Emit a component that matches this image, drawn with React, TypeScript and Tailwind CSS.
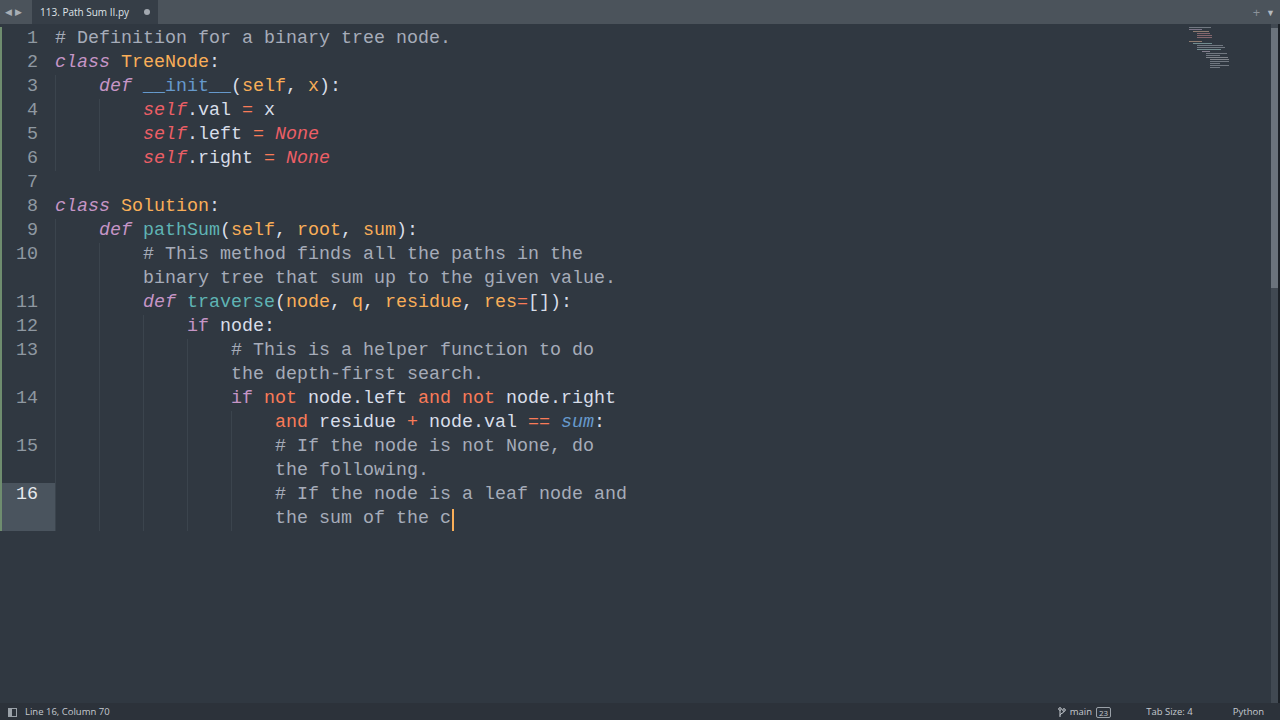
import React from "react";

type Tok = [string, string];

const C = {
  cm: "text-[#a6acb9]",
  kw: "text-[#c695c6] italic",
  ctl: "text-[#c695c6]",
  cls: "text-[#f9ae58]",
  fn: "text-[#5fb4b4]",
  par: "text-[#f9ae58]",
  self: "text-[#ec5f66] italic",
  op: "text-[#f97b58]",
  txt: "text-[#d8dee9]",
  blue: "text-[#6699cc]",
  blueI: "text-[#6699cc] italic",
};

type Row = { num?: string; indent: number; toks: Tok[]; cursor?: boolean };

const rows: Row[] = [
  { num: "1", indent: 0, toks: [["# Definition for a binary tree node.", C.cm]] },
  { num: "2", indent: 0, toks: [["class", C.kw], [" ", C.txt], ["TreeNode", C.cls], [":", C.txt]] },
  {
    num: "3",
    indent: 4,
    toks: [["def", C.kw], [" ", C.txt], ["__init__", C.blue], ["(", C.txt], ["self", C.par], [", ", C.txt], ["x", C.par], ["):", C.txt]],
  },
  { num: "4", indent: 8, toks: [["self", C.self], [".val ", C.txt], ["=", C.op], [" x", C.txt]] },
  { num: "5", indent: 8, toks: [["self", C.self], [".left ", C.txt], ["=", C.op], [" ", C.txt], ["None", C.self]] },
  { num: "6", indent: 8, toks: [["self", C.self], [".right ", C.txt], ["=", C.op], [" ", C.txt], ["None", C.self]] },
  { num: "7", indent: 0, toks: [] },
  { num: "8", indent: 0, toks: [["class", C.kw], [" ", C.txt], ["Solution", C.cls], [":", C.txt]] },
  {
    num: "9",
    indent: 4,
    toks: [
      ["def", C.kw], [" ", C.txt], ["pathSum", C.fn], ["(", C.txt], ["self", C.par], [", ", C.txt],
      ["root", C.par], [", ", C.txt], ["sum", C.par], ["):", C.txt],
    ],
  },
  { num: "10", indent: 8, toks: [["# This method finds all the paths in the", C.cm]] },
  { indent: 8, toks: [["binary tree that sum up to the given value.", C.cm]] },
  {
    num: "11",
    indent: 8,
    toks: [
      ["def", C.kw], [" ", C.txt], ["traverse", C.fn], ["(", C.txt], ["node", C.par], [", ", C.txt], ["q", C.par],
      [", ", C.txt], ["residue", C.par], [", ", C.txt], ["res", C.par], ["=", C.op], ["[]):", C.txt],
    ],
  },
  { num: "12", indent: 12, toks: [["if", C.ctl], [" node:", C.txt]] },
  { num: "13", indent: 16, toks: [["# This is a helper function to do", C.cm]] },
  { indent: 16, toks: [["the depth-first search.", C.cm]] },
  {
    num: "14",
    indent: 16,
    toks: [
      ["if", C.ctl], [" ", C.txt], ["not", C.op], [" node.left ", C.txt], ["and", C.op], [" ", C.txt],
      ["not", C.op], [" node.right", C.txt],
    ],
  },
  {
    indent: 20,
    toks: [
      ["and", C.op], [" residue ", C.txt], ["+", C.op], [" node.val ", C.txt], ["==", C.op], [" ", C.txt],
      ["sum", C.blueI], [":", C.txt],
    ],
  },
  { num: "15", indent: 20, toks: [["# If the node is not None, do", C.cm]] },
  { indent: 20, toks: [["the following.", C.cm]] },
  { num: "16", indent: 20, toks: [["# If the node is a leaf node and", C.cm]] },
  { indent: 20, toks: [["the sum of the c", C.cm]], cursor: true },
];

const miniLines: [number, number, string][] = [
  [14, 0, "#8d949c"], [8, 0, "#9b8ea6"], [10, 3, "#b89a86"], [8, 6, "#a87a80"], [9, 6, "#a87a80"],
  [9, 6, "#a87a80"], [0, 0, ""], [8, 0, "#b89a86"], [12, 3, "#8fb0b0"], [16, 6, "#8d949c"],
  [17, 6, "#8d949c"], [15, 6, "#8fb0b0"], [5, 9, "#a9a0b0"], [13, 12, "#8d949c"], [9, 12, "#8d949c"],
  [14, 12, "#a0a4aa"], [12, 15, "#a0a4aa"], [12, 15, "#8d949c"], [6, 15, "#8d949c"], [12, 15, "#8d949c"],
  [6, 15, "#8d949c"],
];

export default function App() {
  return (
    <div className="flex h-[720px] w-[1280px] flex-col overflow-hidden bg-[#303841] font-['Open_Sans',sans-serif]">
      {/* tab bar */}
      <div className="flex h-6 shrink-0 items-stretch bg-[#4b535b]">
        <div className="flex w-8 items-center gap-[3px] pl-[5px] text-[9px] text-[#a8aeb5]">
          <span>◀</span>
          <span>▶</span>
        </div>
        <div className="flex w-[126px] items-center justify-between bg-[#363e47] pl-[8px] pr-[8px]">
          <span className="text-[10px] text-[#dfe3e8]">113. Path Sum II.py</span>
          <span className="h-[6px] w-[6px] rounded-full bg-[#a3a9b0]" />
        </div>
        <div className="flex-1" />
        <div className="flex items-center gap-[6px] pr-[5px] text-[#8b929a]">
          <span className="text-[13px] leading-none">+</span>
          <span className="text-[9px] leading-none text-[#b4bac0]">▼</span>
        </div>
      </div>

      {/* editor */}
      <div className="flex min-h-0 flex-1">
        <div className="flex flex-1 flex-col pt-[3px] font-['Liberation_Mono',monospace] text-[18.33px] leading-6">
          <div className="border-l-2 border-[#6f8d6f]">
            {rows.map((r, i) => {
              const cur = i >= 19;
              return (
                <div key={i} className="flex h-6">
                  <div
                    className={`w-[53px] shrink-0 pr-[17px] text-right ${
                      cur ? "bg-[#4a545e] text-[#e6e9ed]" : "text-[#8f98a1]"
                    }`}
                  >
                    {r.num ?? ""}
                  </div>
                  <div className="flex whitespace-pre">
                    {Array.from({ length: r.indent / 4 }).map((_, k) => (
                      <span key={k} className="inline-block h-6 w-[44px] border-l border-[#3b444d]" />
                    ))}
                    {r.toks.map(([t, c], k) => (
                      <span key={k} className={c}>
                        {t}
                      </span>
                    ))}
                    {r.cursor && <span className="ml-px mt-[2px] h-[22px] w-[2px] bg-[#f9ae58]" />}
                  </div>
                </div>
              );
            })}
          </div>
        </div>

        {/* minimap */}
        <div className="flex w-[84px] shrink-0 flex-col gap-px pl-[2px] pt-[3px]">
          {miniLines.map(([w, ind, col], i) => (
            <div key={i} className="flex h-px">
              <div style={{ width: ind * 1.4 }} />
              <div style={{ width: w * 1.6, backgroundColor: col || "transparent" }} className="h-px opacity-70" />
            </div>
          ))}
        </div>

        {/* scrollbar */}
        <div className="flex w-[7px] shrink-0 flex-col bg-[#414952] pt-[4px]">
          <div className="h-[260px] bg-[#6b737c]" />
        </div>
        <div className="w-[2px] shrink-0 bg-[#1c2127]" />
      </div>

      {/* status bar */}
      <div className="flex h-[17px] shrink-0 items-center bg-[#2c323a] pt-px text-[9.5px] text-[#c4c9cf]">
        <div className="ml-[8px] mr-[8px] h-[9px] w-[9px] border border-[#9aa1a8]">
          <div className="h-full w-[3px] bg-[#9aa1a8]" />
        </div>
        <span>Line 16, Column 70</span>
        <div className="flex-1" />
        <div className="flex items-center gap-[4px]">
          <svg width="8" height="10" viewBox="0 0 8 10" fill="none" stroke="#c4c9cf" strokeWidth="1">
            <circle cx="2" cy="2" r="1.3" />
            <circle cx="6" cy="3" r="1.3" />
            <path d="M2 3.3V10M6 4.3c0 2-4 2-4 4" />
          </svg>
          <span>main</span>
          <span className="rounded-[2px] border border-[#9aa1a8] px-[2px] text-[8px] leading-[9px]">23</span>
        </div>
        <span className="ml-[35px]">Tab Size: 4</span>
        <span className="ml-[40px] mr-[16px]">Python</span>
      </div>
    </div>
  );
}
